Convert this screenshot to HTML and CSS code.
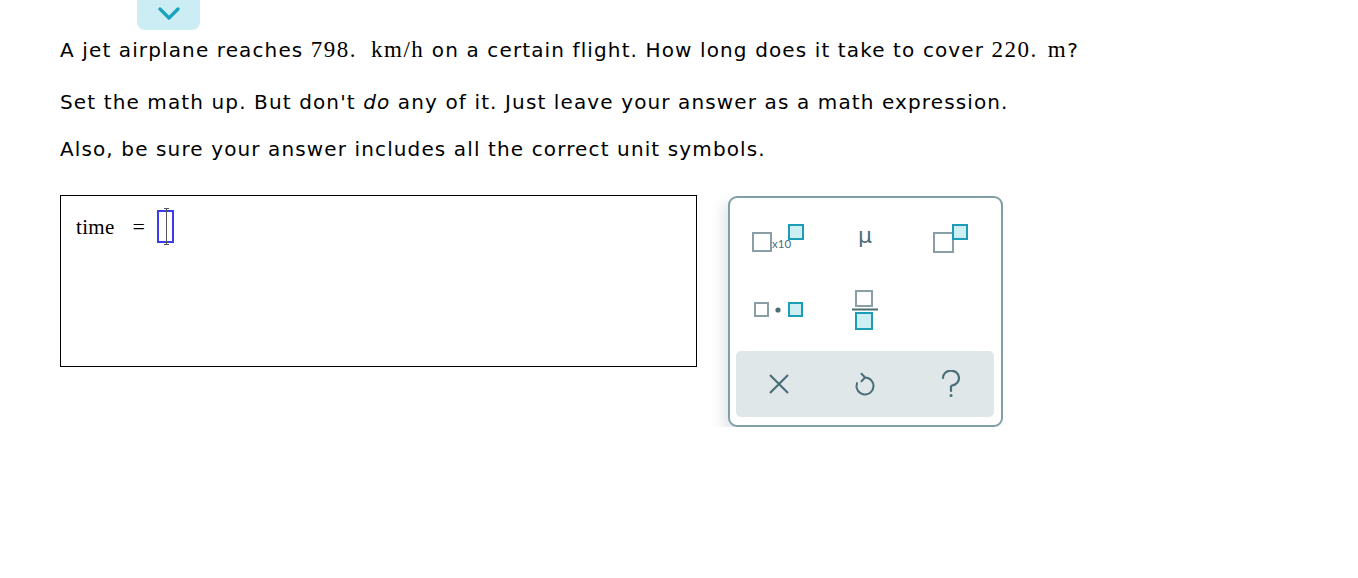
FILE: index.html
```html
<!DOCTYPE html>
<html>
<head>
<meta charset="utf-8">
<link rel="stylesheet" href="styles.css">
</head>
<body>
<div class="tab">
  <svg width="22" height="14" viewBox="0 0 22 14"><path d="M2 2 L11 11 L20 2" fill="none" stroke="#17a2c0" stroke-width="3.2" stroke-linecap="round" stroke-linejoin="round"/></svg>
</div>
<div class="question">
  <p class="line l1">A jet airplane reaches <span class="m">798.</span><span class="m sp">km/h</span> on a certain flight. How long does it take to cover <span class="m">220.</span><span class="m sp2">m</span>?</p>
  <p class="line l2">Set the math up. But don't <em>do</em> any of it. Just leave your answer as a math expression.</p>
  <p class="line l3">Also, be sure your answer includes all the correct unit symbols.</p>
</div>
<div class="work">
  <div class="answer">
    <span class="var">time</span>
    <span class="eq">=</span>
    <span class="cursor"><span class="caret"></span></span>
  </div>
  <div class="palette">
    <div class="grid">
      <div class="cell">
        <svg width="56" height="30" viewBox="0 0 56 30">
          <rect x="2" y="10" width="18" height="18" fill="#fff" stroke="#8a9fa5" stroke-width="2"/>
          <text x="21" y="25" font-family="Lato, 'Open Sans', sans-serif" font-size="11.5" fill="#4d6f78">x10</text>
          <rect x="38" y="2" width="14" height="14" fill="#cdeef3" stroke="#1a9db5" stroke-width="2"/>
        </svg>
      </div>
      <div class="cell mu">μ</div>
      <div class="cell">
        <svg width="38" height="30" viewBox="0 0 38 30">
          <rect x="2" y="10" width="19" height="19" fill="#fff" stroke="#8a9fa5" stroke-width="2"/>
          <rect x="21" y="2" width="14" height="14" fill="#cdeef3" stroke="#1a9db5" stroke-width="2"/>
        </svg>
      </div>
      <div class="cell">
        <svg width="52" height="18" viewBox="0 0 52 18">
          <rect x="2" y="2" width="13" height="13" fill="#fff" stroke="#8a9fa5" stroke-width="2"/>
          <circle cx="25" cy="9" r="2.6" fill="#4d6f78"/>
          <rect x="36" y="2" width="13" height="13" fill="#cdeef3" stroke="#1a9db5" stroke-width="2"/>
        </svg>
      </div>
      <div class="cell">
        <svg width="28" height="42" viewBox="0 0 28 42">
          <rect x="5" y="2" width="16" height="15" fill="#fff" stroke="#8a9fa5" stroke-width="2"/>
          <rect x="1" y="19.5" width="26" height="2" fill="#4d6f78"/>
          <rect x="5" y="24" width="16" height="16" fill="#cdeef3" stroke="#1a9db5" stroke-width="2"/>
        </svg>
      </div>
      <div class="cell"></div>
    </div>
    <div class="bar">
      <div class="btn">
        <svg width="22" height="22" viewBox="0 0 22 22"><path d="M2 2 L20 20 M20 2 L2 20" stroke="#4a6f7a" stroke-width="2.2" fill="none"/></svg>
      </div>
      <div class="btn">
        <svg width="24" height="26" viewBox="0 0 24 26"><path d="M12 6.5 A8.5 8.5 0 1 1 4 12.1" stroke="#4a6f7a" stroke-width="2" fill="none" stroke-linecap="round"/><path d="M8.5 2.8 L12 6.5 L8.5 10.2" stroke="#4a6f7a" stroke-width="2" fill="none" stroke-linecap="round" stroke-linejoin="round"/></svg>
      </div>
      <div class="btn">
        <svg width="22" height="28" viewBox="0 0 22 28"><path d="M3 8 A8 7.5 0 1 1 12 15.5 L11 16.5 L11 21" stroke="#4a6f7a" stroke-width="2.2" fill="none" stroke-linecap="round"/><circle cx="11" cy="25.6" r="1.5" fill="#4a6f7a"/></svg>
      </div>
    </div>
  </div>
</div>
</body>
</html>
```
FILE: styles.css
```css
html, body {
  margin: 0;
  padding: 0;
  background: #fff;
}
body {
  font-family: "DejaVu Sans", Verdana, sans-serif;
  color: #000;
}
.tab {
  margin-left: 137px;
  width: 63px;
  height: 30px;
  background: #ccedf3;
  border-radius: 0 0 8px 8px;
  display: flex;
  align-items: center;
  justify-content: center;
}
.tab svg { margin-top: -2px; }
.question {
  padding-left: 60px;
}
.line {
  margin: 0;
  font-size: 20px;
  letter-spacing: 1.12px;
  line-height: 24px;
  white-space: nowrap;
}
.l1 { padding-top: 8px; }
.l2 { padding-top: 28px; }
.l3 { padding-top: 23px; }
.m {
  font-family: "Liberation Serif", "Times New Roman", serif;
  font-size: 23px;
  letter-spacing: 1.5px;
}
.sp { margin-left: 14px; }
.sp2 { margin-left: 10px; }
.work {
  display: flex;
  align-items: flex-start;
  margin-top: 34px;
  padding-left: 60px;
}
.answer {
  box-sizing: border-box;
  width: 637px;
  height: 172px;
  border: 1.5px solid #000;
  display: flex;
  align-items: flex-start;
  padding: 14px 0 0 15px;
  font-family: "Liberation Serif", "Times New Roman", serif;
  font-size: 21px;
}
.var { line-height: 34px; letter-spacing: 0.3px; }
.eq { margin-left: 18px; line-height: 34px; font-size: 22px; }
.cursor {
  position: relative;
  box-sizing: border-box;
  margin-left: 12px;
  margin-top: 0;
  width: 17px;
  height: 33px;
  border: 2px solid #3b3cf0;
}
.caret {
  position: absolute;
  left: 7px;
  top: -4px;
  width: 1.5px;
  height: 37px;
  background: #555;
}
.caret::before,
.caret::after {
  content: "";
  position: absolute;
  left: -2px;
  width: 5.5px;
  height: 1px;
  background: #555;
}
.caret::before { top: 0; }
.caret::after { bottom: 0; }
.palette {
  box-sizing: border-box;
  margin-left: 31px;
  margin-top: 1px;
  width: 275px;
  height: 231px;
  border: 2px solid #7f9ea5;
  border-radius: 9px;
  padding: 4px 7px 7px 6px;
  box-shadow: -6px 6px 12px rgba(120, 140, 150, 0.2);
  background: #fff;
}
.grid {
  display: grid;
  grid-template-columns: repeat(3, 1fr);
  grid-template-rows: 72px 72px;
}
.cell {
  display: flex;
  align-items: center;
  justify-content: center;
}
.mu {
  font-family: "DejaVu Sans", sans-serif;
  font-size: 22px;
  color: #4d6f78;
  padding-bottom: 6px;
}
.bar {
  margin-top: 5px;
  height: 66px;
  background: #e0e7e9;
  border-radius: 5px;
  display: grid;
  grid-template-columns: repeat(3, 1fr);
}
.btn {
  display: flex;
  align-items: center;
  justify-content: center;
}
```
